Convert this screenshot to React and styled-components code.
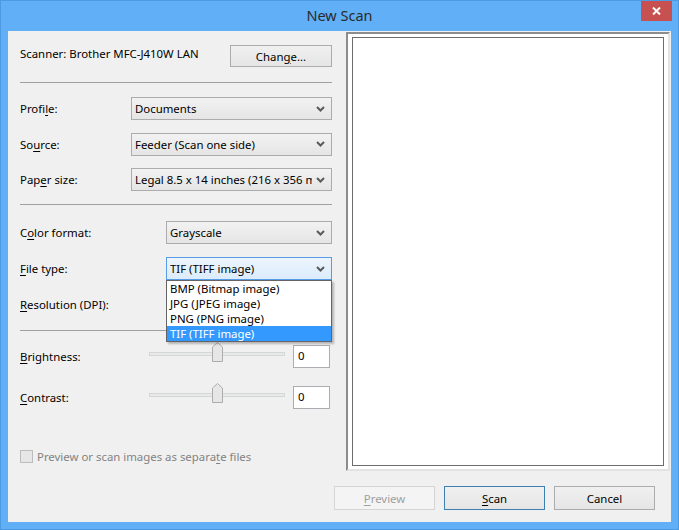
import React from 'react';
import styled, { createGlobalStyle } from 'styled-components';

const GlobalStyle = createGlobalStyle`
  html, body { margin: 0; padding: 0; background: #ffffff; }
  body {
    font-family: "Noto Sans", "Open Sans", sans-serif;
    font-size: 11.4px;
    color: #000000;
  }
  * { box-sizing: border-box; }
`;

const Window = styled.div`
  width: 679px;
  height: 530px;
  background: #61aff6;
  border: 1px solid #4c9be2;
  display: flex;
  flex-direction: column;
`;

const TitleBar = styled.div`
  height: 30px;
  display: grid;
  grid-template-columns: 1fr auto 1fr;
  align-items: start;
`;

const Title = styled.div`
  grid-column: 2;
  font-size: 14.5px;
  color: #2b2b2b;
  line-height: 29px;
`;

const CloseButton = styled.div`
  grid-column: 3;
  justify-self: end;
  margin-right: 6px;
  width: 31px;
  height: 20px;
  background: #c75050;
  display: flex;
  align-items: center;
  justify-content: center;
`;

const Body = styled.div`
  flex: 1;
  margin: 0 7px 7px;
  background: #f0f0f0;
  padding-top: 1px;
  display: grid;
  grid-template-columns: 338px 324px;
  grid-template-rows: 439px auto;
`;

const LeftPanel = styled.div`
  padding: 13px 14px 0 12px;
  display: flex;
  flex-direction: column;
`;

const ScannerRow = styled.div`
  display: flex;
  justify-content: space-between;
  align-items: flex-start;
`;

const ScannerName = styled.div`
  padding-top: 1px;
`;

const Separator = styled.div`
  height: 1px;
  background: #a0a0a0;
  margin-top: ${p => p.$top}px;
`;

const Fields = styled.div`
  display: flex;
  flex-direction: column;
  gap: ${p => p.$gap}px;
  margin-top: ${p => p.$top}px;
`;

const FieldRow = styled.div`
  display: grid;
  grid-template-columns: ${p => p.$labelWidth}px minmax(0, 1fr);
  align-items: center;
  height: 23px;
  position: relative;
  z-index: ${p => (p.$raised ? 2 : 'auto')};
`;

const Label = styled.div`
  white-space: nowrap;
`;

const Key = styled.span`
  text-decoration: underline;
  text-underline-offset: 2px;
`;

const ComboWrap = styled.div`
  position: relative;
  height: 23px;
  min-width: 0;
`;

const Combo = styled.div`
  height: 23px;
  border: 1px solid ${p => (p.$focused ? '#569de5' : '#acacac')};
  background: ${p =>
    p.$focused
      ? 'linear-gradient(#ecf4fc, #dcecfc)'
      : 'linear-gradient(#f2f2f2, #e5e5e5)'};
  display: flex;
  align-items: center;
  padding: 0 6px 0 3px;
  white-space: nowrap;
  overflow: hidden;
`;

const ComboText = styled.span`
  flex: 1;
  min-width: 0;
  overflow: hidden;
  margin-right: 4px;
`;

const DropList = styled.div`
  position: absolute;
  top: 23px;
  left: 0;
  right: 0;
  background: #ffffff;
  border: 1px solid #646464;
  box-shadow: 2px 2px 2px rgba(0, 0, 0, 0.25);
`;

const DropItem = styled.div`
  height: 15px;
  line-height: 15px;
  padding-left: 3px;
  background: ${p => (p.$selected ? '#3399ff' : 'transparent')};
  color: ${p => (p.$selected ? '#ffffff' : '#000000')};
`;

const SliderRow = styled.div`
  display: flex;
  align-items: center;
  height: 23px;
`;

const SliderLabel = styled.div`
  width: 129px;
`;

const Slider = styled.div`
  position: relative;
  width: 136px;
  height: 23px;
  margin-right: 8px;
`;

const Track = styled.div`
  position: absolute;
  left: 0;
  right: 0;
  top: 7px;
  height: 4px;
  background: #e7eaea;
  border: 1px solid #d6d6d6;
`;

const Thumb = styled.svg`
  position: absolute;
  left: 63px;
  top: -3px;
`;

const NumberBox = styled.div`
  width: 37px;
  height: 23px;
  background: #ffffff;
  border: 1px solid #abadb3;
  padding-left: 4px;
  line-height: 20px;
`;

const CheckRow = styled.div`
  margin-top: 40px;
  display: flex;
  align-items: center;
  gap: 4px;
  color: #838383;
`;

const CheckBox = styled.div`
  width: 13px;
  height: 13px;
  border: 1px solid #bcbcbc;
  background: #e6e6e6;
`;

const Preview = styled.div`
  background: #ffffff;
  border-style: solid;
  border-width: 2px;
  border-color: #8c8c8c #e3e3e3 #e3e3e3 #8c8c8c;
  padding: 3px 4px;
  display: flex;
`;

const PreviewFrame = styled.div`
  flex: 1;
  border: 1px solid #6d6d6d;
`;

const Footer = styled.div`
  grid-column: 1 / -1;
  display: flex;
  justify-content: flex-end;
  gap: 9px;
  padding: 15px 15px 0 0;
`;

const Button = styled.div`
  width: ${p => p.$width || 101}px;
  height: ${p => p.$height || 24}px;
  border: 1px solid ${p => (p.$default ? '#3c7fb1' : p.$disabled ? '#d5d5d5' : '#acacac')};
  background: ${p => (p.$disabled ? '#f4f4f4' : 'linear-gradient(#f0f0f0, #e5e5e5)')};
  color: ${p => (p.$disabled ? '#a0a0a0' : '#000000')};
  display: flex;
  align-items: center;
  justify-content: center;
`;

function Chevron() {
  return (
    <svg width="9" height="6" viewBox="0 0 9 6">
      <path d="M1 1 L4.5 4.5 L8 1" fill="none" stroke="#5a5a5a" strokeWidth="2" />
    </svg>
  );
}

function Select({ value, focused, options, selected }) {
  return (
    <ComboWrap>
      <Combo $focused={focused}>
        <ComboText>{value}</ComboText>
        <Chevron />
      </Combo>
      {options && (
        <DropList>
          {options.map(o => (
            <DropItem key={o} $selected={o === selected}>{o}</DropItem>
          ))}
        </DropList>
      )}
    </ComboWrap>
  );
}

function SliderControl({ label }) {
  return (
    <SliderRow>
      <SliderLabel>{label}</SliderLabel>
      <Slider>
        <Track />
        <Thumb width="11" height="20" viewBox="0 0 11 20">
          <path d="M0.5 19.5 L0.5 5 L5.5 0.5 L10.5 5 L10.5 19.5 Z" fill="#e6e6e6" stroke="#acacac" />
        </Thumb>
      </Slider>
      <NumberBox>0</NumberBox>
    </SliderRow>
  );
}

const fileTypes = ['BMP (Bitmap image)', 'JPG (JPEG image)', 'PNG (PNG image)', 'TIF (TIFF image)'];

export default function App() {
  return (
    <>
      <GlobalStyle />
      <Window>
        <TitleBar>
          <Title>New Scan</Title>
          <CloseButton>
            <svg width="9" height="8" viewBox="0 0 9 8">
              <path d="M1 0.5 L8 7.5 M8 0.5 L1 7.5" stroke="#ffffff" strokeWidth="2" />
            </svg>
          </CloseButton>
        </TitleBar>
        <Body>
          <LeftPanel>
            <ScannerRow>
              <ScannerName>Scanner: Brother MFC-J410W LAN</ScannerName>
              <Button $width={102} $height={22}>
                <span>Chan<Key>g</Key>e...</span>
              </Button>
            </ScannerRow>
            <Separator $top={15} />
            <Fields $top={14} $gap={12.5}>
              <FieldRow $labelWidth={111}>
                <Label>Profi<Key>l</Key>e:</Label>
                <Select value="Documents" />
              </FieldRow>
              <FieldRow $labelWidth={111}>
                <Label>So<Key>u</Key>rce:</Label>
                <Select value="Feeder (Scan one side)" />
              </FieldRow>
              <FieldRow $labelWidth={111}>
                <Label>Pap<Key>e</Key>r size:</Label>
                <Select value="Legal 8.5 x 14 inches (216 x 356 mm)" />
              </FieldRow>
            </Fields>
            <Separator $top={13} />
            <Fields $top={16} $gap={13}>
              <FieldRow $labelWidth={146}>
                <Label>C<Key>o</Key>lor format:</Label>
                <Select value="Grayscale" />
              </FieldRow>
              <FieldRow $labelWidth={146} $raised>
                <Label><Key>F</Key>ile type:</Label>
                <Select value="TIF (TIFF image)" focused options={fileTypes} selected="TIF (TIFF image)" />
              </FieldRow>
              <FieldRow $labelWidth={146}>
                <Label><Key>R</Key>esolution (DPI):</Label>
                <Select value="" />
              </FieldRow>
            </Fields>
            <Separator $top={14} />
            <Fields $top={14} $gap={18}>
              <SliderControl label={<span><Key>B</Key>rightness:</span>} />
              <SliderControl label={<span><Key>C</Key>ontrast:</span>} />
            </Fields>
            <CheckRow>
              <CheckBox />
              <span>Preview or scan images as separa<Key>t</Key>e files</span>
            </CheckRow>
          </LeftPanel>
          <Preview>
            <PreviewFrame />
          </Preview>
          <Footer>
            <Button $disabled><span><Key>P</Key>review</span></Button>
            <Button $default><span><Key>S</Key>can</span></Button>
            <Button>Cancel</Button>
          </Footer>
        </Body>
      </Window>
    </>
  );
}
